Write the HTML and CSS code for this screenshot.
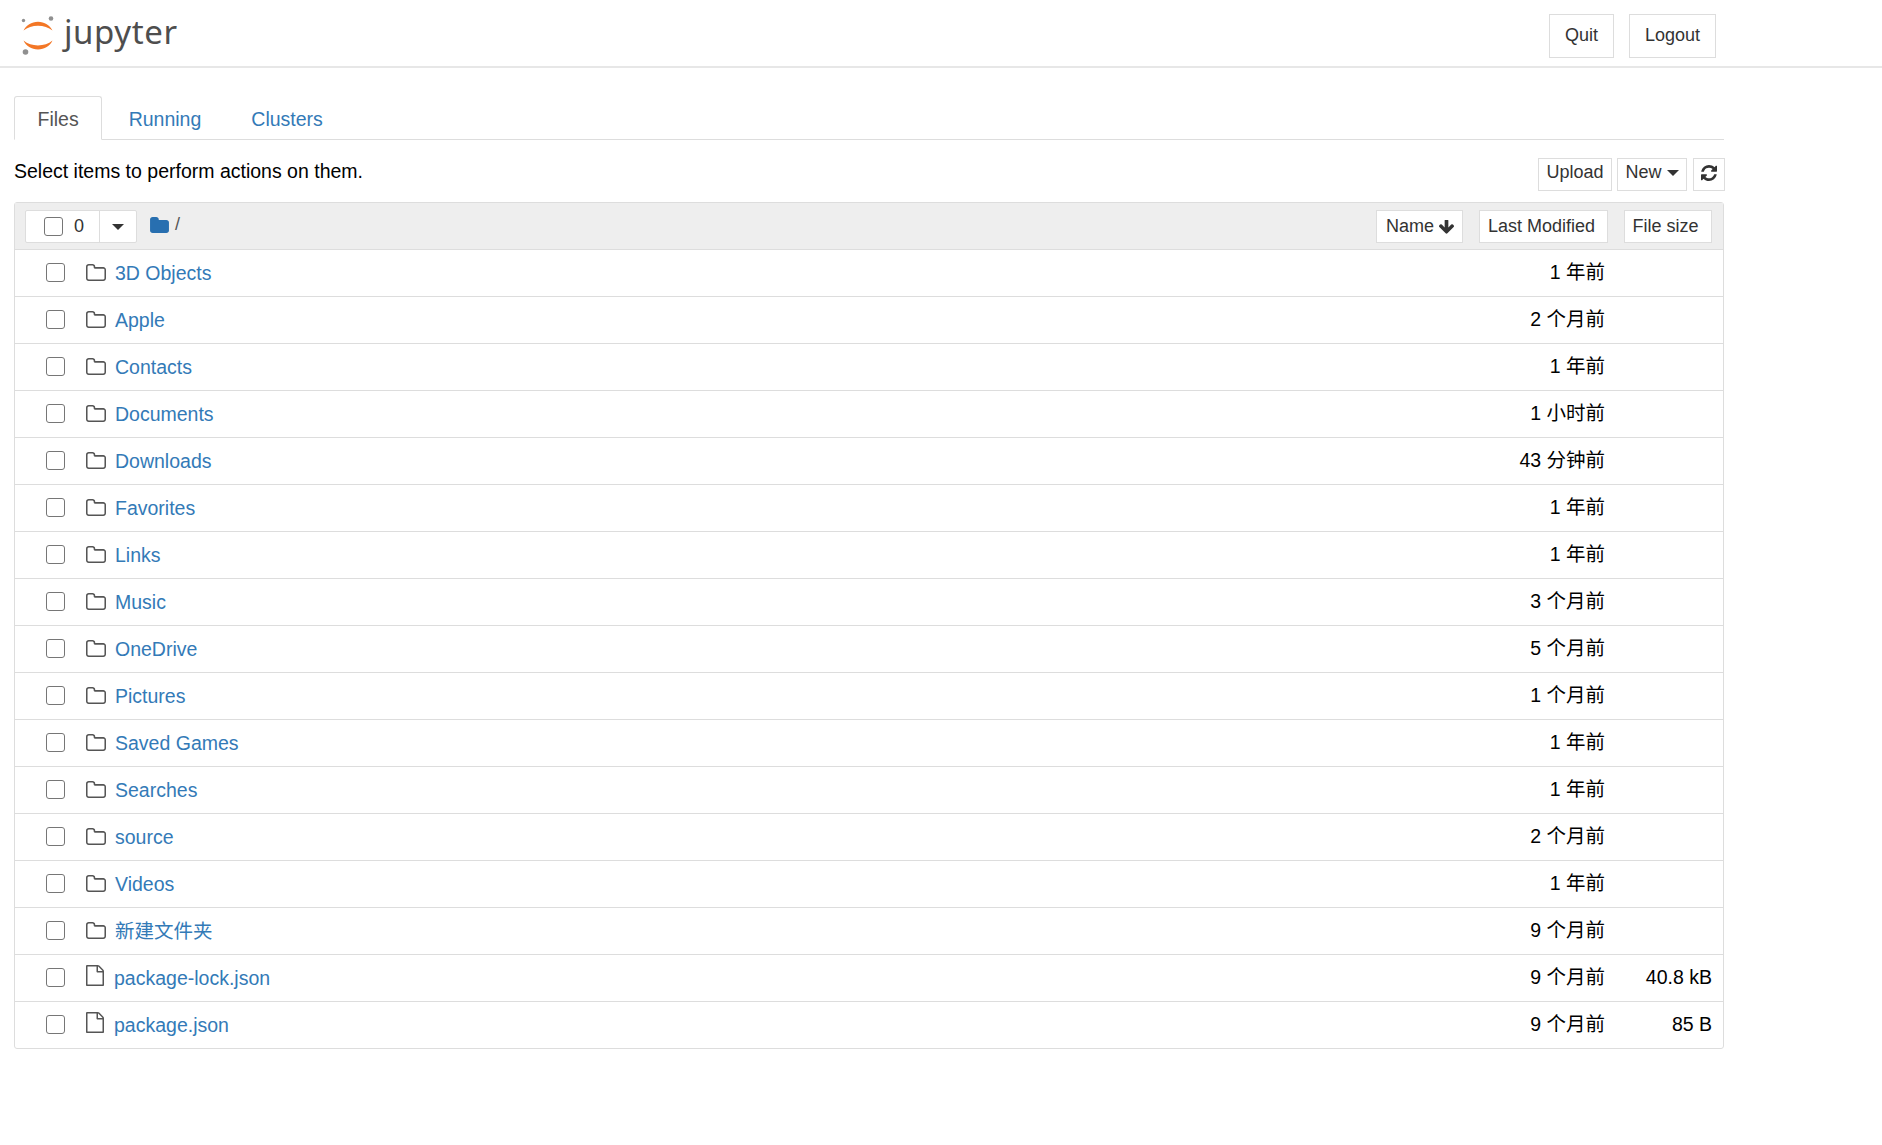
FILE: index.html
```html
<!DOCTYPE html>
<html lang="en">
<head>
<meta charset="utf-8">
<title>Home</title>
<link rel="stylesheet" href="styles.css">
</head>
<body>
<svg class="defs" width="0" height="0" aria-hidden="true">
  <symbol id="i-folder-o" viewBox="64 128 1664 1408"><path d="M1600 1312v-704q0-40-28-68t-68-28h-704q-40 0-68-28t-28-68v-64q0-40-28-68t-68-28h-320q-40 0-68 28t-28 68v960q0 40 28 68t68 28h1216q40 0 68-28t28-68zm128-704v704q0 92-66 158t-158 66h-1216q-92 0-158-66t-66-158v-960q0-92 66-158t158-66h320q92 0 158 66t66 158v32h672q92 0 158 66t66 158z"/></symbol>
  <symbol id="i-folder" viewBox="64 128 1664 1408"><path d="M1728 608v704q0 92-66 158t-158 66h-1216q-92 0-158-66t-66-158v-960q0-92 66-158t158-66h320q92 0 158 66t66 158v32h672q92 0 158 66t66 158z"/></symbol>
  <symbol id="i-file" viewBox="128 0 1536 1792"><path d="M1596 380q28 28 48 76t20 88v1152q0 40-28 68t-68 28h-1344q-40 0-68-28t-28-68v-1600q0-40 28-68t68-28h896q40 0 88 20t76 48zm-444-244v376h376q-10-29-22-41l-313-313q-12-12-41-22zm384 1528v-1024h-416q-40 0-68-28t-28-68v-416h-768v1536h1280z"/></symbol>
  <symbol id="i-refresh" viewBox="128 128 1536 1536"><path d="M1639 1056q0 5-1 7-64 268-268 434.500t-478 166.500q-146 0-282.500-55t-243.500-157l-129 129q-19 19-45 19t-45-19-19-45v-448q0-26 19-45t45-19h448q26 0 45 19t19 45-19 45l-137 137q71 66 161 102t187 36q134 0 250-65t186-179q11-17 53-117 8-23 30-23h192q13 0 22.500 9.500t9.500 22.500zm25-800v448q0 26-19 45t-45 19h-448q-26 0-45-19t-19-45 19-45l138-138q-148-137-349-137-134 0-250 65t-186 179q-11 17-53 117-8 23-30 23h-199q-13 0-22.500-9.500t-9.500-22.500v-7q65-268 270-434.500t480-166.500q146 0 284 55.500t245 156.500l130-129q19-19 45-19t45 19 19 45z"/></symbol>
  <symbol id="i-down" viewBox="117 219 1558 1392"><path d="M1675 832q0 53-37 90l-651 652q-39 37-91 37-53 0-90-37l-651-652q-38-36-38-90 0-53 38-91l74-75q39-37 91-37 53 0 90 37l294 294v-704q0-52 38-90t90-38h128q52 0 90 38t38 90v704l294-294q37-37 90-37 52 0 91 37l75 75q37 39 37 91z"/></symbol>
</svg>

<header class="site-header">
  <a class="logo" href="#">
    <svg class="logo-mark" viewBox="0 0 36 40" width="36" height="40" aria-hidden="true">
      <path class="arc" d="M3.500 15.500C6 10.500 11.500 6.800 18 6.800S30 10.500 32.500 15.500C28.500 12.300 23.500 10.700 18 10.700S7.500 12.300 3.500 15.500Z"/>
      <path class="arc" d="M3.500 25.500C6 31 11.500 34.500 18 34.500S30 31 32.500 25.500C28.500 28.800 23.500 30.400 18 30.400S7.500 28.800 3.500 25.500Z"/>
      <circle class="dot" cx="31" cy="3.500" r="2.300"/>
      <circle class="dot" cx="3.500" cy="5.500" r="1.700"/>
      <circle class="dot" cx="5.500" cy="37" r="2.800"/>
    </svg>
    <span class="logo-text">jupyter</span>
  </a>
  <div class="header-actions">
    <a class="btn btn-head" href="#">Quit</a>
    <a class="btn btn-head" href="#">Logout</a>
  </div>
</header>

<main class="page">
  <nav class="tabs">
    <a class="tab active" href="#">Files</a>
    <a class="tab" href="#">Running</a>
    <a class="tab" href="#">Clusters</a>
  </nav>

  <div class="toolbar">
    <span class="hint">Select items to perform actions on them.</span>
    <div class="toolbar-actions">
      <a class="btn btn-tool btn-upload" href="#">Upload</a>
      <a class="btn btn-tool btn-new" href="#">New <span class="caret"></span></a>
      <a class="btn btn-tool btn-refresh" href="#"><svg class="ico-refresh"><use href="#i-refresh"/></svg></a>
    </div>
  </div>

  <section class="list">
    <div class="list-head">
      <div class="select-group">
        <div class="select-main"><input class="check" type="checkbox"><span class="count">0</span></div>
        <div class="select-drop"><span class="caret"></span></div>
      </div>
      <a class="crumb" href="#"><svg class="ico-crumb"><use href="#i-folder"/></svg></a>
      <span class="crumb-sep">/</span>
      <div class="sort-group">
        <a class="btn btn-sort btn-name" href="#">Name <svg class="ico-down"><use href="#i-down"/></svg></a>
        <a class="btn btn-sort" href="#">Last Modified</a>
        <a class="btn btn-sort" href="#">File size</a>
      </div>
    </div>

    <div class="row"><input class="check" type="checkbox"><svg class="ico-folder"><use href="#i-folder-o"/></svg><a class="name" href="#">3D Objects</a><span class="time">1 年前</span><span class="size"></span></div>
    <div class="row"><input class="check" type="checkbox"><svg class="ico-folder"><use href="#i-folder-o"/></svg><a class="name" href="#">Apple</a><span class="time">2 个月前</span><span class="size"></span></div>
    <div class="row"><input class="check" type="checkbox"><svg class="ico-folder"><use href="#i-folder-o"/></svg><a class="name" href="#">Contacts</a><span class="time">1 年前</span><span class="size"></span></div>
    <div class="row"><input class="check" type="checkbox"><svg class="ico-folder"><use href="#i-folder-o"/></svg><a class="name" href="#">Documents</a><span class="time">1 小时前</span><span class="size"></span></div>
    <div class="row"><input class="check" type="checkbox"><svg class="ico-folder"><use href="#i-folder-o"/></svg><a class="name" href="#">Downloads</a><span class="time">43 分钟前</span><span class="size"></span></div>
    <div class="row"><input class="check" type="checkbox"><svg class="ico-folder"><use href="#i-folder-o"/></svg><a class="name" href="#">Favorites</a><span class="time">1 年前</span><span class="size"></span></div>
    <div class="row"><input class="check" type="checkbox"><svg class="ico-folder"><use href="#i-folder-o"/></svg><a class="name" href="#">Links</a><span class="time">1 年前</span><span class="size"></span></div>
    <div class="row"><input class="check" type="checkbox"><svg class="ico-folder"><use href="#i-folder-o"/></svg><a class="name" href="#">Music</a><span class="time">3 个月前</span><span class="size"></span></div>
    <div class="row"><input class="check" type="checkbox"><svg class="ico-folder"><use href="#i-folder-o"/></svg><a class="name" href="#">OneDrive</a><span class="time">5 个月前</span><span class="size"></span></div>
    <div class="row"><input class="check" type="checkbox"><svg class="ico-folder"><use href="#i-folder-o"/></svg><a class="name" href="#">Pictures</a><span class="time">1 个月前</span><span class="size"></span></div>
    <div class="row"><input class="check" type="checkbox"><svg class="ico-folder"><use href="#i-folder-o"/></svg><a class="name" href="#">Saved Games</a><span class="time">1 年前</span><span class="size"></span></div>
    <div class="row"><input class="check" type="checkbox"><svg class="ico-folder"><use href="#i-folder-o"/></svg><a class="name" href="#">Searches</a><span class="time">1 年前</span><span class="size"></span></div>
    <div class="row"><input class="check" type="checkbox"><svg class="ico-folder"><use href="#i-folder-o"/></svg><a class="name" href="#">source</a><span class="time">2 个月前</span><span class="size"></span></div>
    <div class="row"><input class="check" type="checkbox"><svg class="ico-folder"><use href="#i-folder-o"/></svg><a class="name" href="#">Videos</a><span class="time">1 年前</span><span class="size"></span></div>
    <div class="row"><input class="check" type="checkbox"><svg class="ico-folder"><use href="#i-folder-o"/></svg><a class="name" href="#">新建文件夹</a><span class="time">9 个月前</span><span class="size"></span></div>
    <div class="row"><input class="check" type="checkbox"><svg class="ico-file"><use href="#i-file"/></svg><a class="name" href="#">package-lock.json</a><span class="time">9 个月前</span><span class="size">40.8 kB</span></div>
    <div class="row"><input class="check" type="checkbox"><svg class="ico-file"><use href="#i-file"/></svg><a class="name" href="#">package.json</a><span class="time">9 个月前</span><span class="size">85 B</span></div>
  </section>
</main>
</body>
</html>
```

FILE: styles.css
```css
* { box-sizing: border-box; }

html, body { margin: 0; padding: 0; }

body {
  background: #fff;
  color: #000;
  font-family: "Liberation Sans", "Noto Sans CJK SC", sans-serif;
  font-size: 19.5px;
  line-height: 1.42857;
}

a { text-decoration: none; }

.defs { position: absolute; }

.site-header {
  height: 68px;
  border-bottom: 2px solid #e7e7e7;
  display: flex;
  align-items: flex-start;
  padding: 0 166px 0 20px;
}

.logo {
  display: flex;
  align-items: flex-start;
  height: 66px;
  padding-top: 15px;
}

.logo-mark { display: block; width: 36px; height: 40px; }
.arc { fill: #f37726; }
.dot { fill: #909090; }

.logo-text {
  font-family: "Noto Sans", sans-serif;
  font-size: 33px;
  line-height: 36px;
  color: #4e4e4e;
  margin-left: 8px;
  margin-top: -1px;
  letter-spacing: 0.6px;
}

.header-actions {
  margin-left: auto;
  margin-top: 14px;
  display: flex;
  gap: 15px;
}

.btn {
  display: flex;
  align-items: center;
  justify-content: center;
  background: #fff;
  border: 1.5px solid #ddd;
  color: #333;
  white-space: nowrap;
}

.btn-head { height: 44px; padding: 0 15px 1px; font-size: 18px; }

.page { width: 1710px; margin-left: 14px; }

.tabs {
  margin-top: 28px;
  height: 44px;
  display: flex;
  border-bottom: 1.5px solid #ddd;
}

.tab {
  height: 44px;
  padding: 4px 22.500px 0;
  margin-right: 3px;
  color: #337ab7;
  display: flex;
  align-items: center;
  border: 1.5px solid transparent;
  font-size: 19.5px;
}

.tab.active {
  color: #555;
  background: #fff;
  border-color: #ddd;
  border-bottom-color: #fff;
  border-radius: 3px 3px 0 0;
}

.toolbar {
  height: 62px;
  display: flex;
  align-items: flex-start;
  justify-content: space-between;
}

.hint { margin-top: 18px; }

.toolbar-actions {
  display: flex;
  margin-top: 18px;
  margin-right: -1px;
}

.btn-tool { height: 33px; font-size: 18px; padding-bottom: 3px; }
.btn-upload { width: 74px; }
.btn-new { width: 70px; margin-left: 5px; gap: 5px; }
.btn-refresh { width: 32px; margin-left: 6px; padding-bottom: 4px; }

.ico-refresh { width: 16px; height: 16px; fill: #333; }

.caret {
  display: inline-block;
  width: 0;
  height: 0;
  border-top: 6px solid #333;
  border-left: 6px solid transparent;
  border-right: 6px solid transparent;
}

.list {
  border: 1.5px solid #ddd;
  border-radius: 3px;
}

.list-head {
  height: 47px;
  background: #eee;
  border-bottom: 1.5px solid #ddd;
  display: flex;
  align-items: center;
  padding: 0 11px 0 10px;
}

.select-group {
  display: flex;
  height: 33px;
  width: 112px;
  background: #fff;
  border: 1.5px solid #ddd;
  border-radius: 2px;
}

.select-main {
  width: 74px;
  border-right: 1.5px solid #ddd;
  display: flex;
  align-items: center;
  padding-left: 18px;
  gap: 11px;
  font-size: 18px;
  color: #333;
}

.count { padding-top: 2px; }

.select-drop {
  flex: 1;
  display: flex;
  align-items: center;
  justify-content: center;
  padding-top: 1px;
}

.check {
  appearance: none;
  -webkit-appearance: none;
  margin: 0;
  width: 19px;
  height: 19px;
  flex: none;
  background: #fff;
  border: 1.5px solid #767676;
  border-radius: 3px;
}

.crumb { display: flex; margin-left: 13px; margin-top: -2px; }
.ico-crumb { width: 19px; height: 16px; fill: #286fb0; }
.crumb-sep { margin-left: 6px; margin-top: -2px; color: #555; font-size: 18px; }

.sort-group {
  margin-left: auto;
  display: flex;
  gap: 15.5px;
}

.btn-sort { height: 33px; padding: 2px 12.5px 0 7.5px; font-size: 18px; }
.btn-name { padding: 2px 8px 0 9px; gap: 5px; margin-right: 1px; }
.ico-down { width: 15px; height: 14px; fill: #333; }

.row {
  height: 47px;
  border-bottom: 1.5px solid #ddd;
  display: flex;
  align-items: center;
  padding-left: 31px;
  font-size: 19.5px;
}

.row:last-child { border-bottom: 0; height: 46px; }

.row .check { margin-top: -1px; }

.ico-folder { width: 20px; height: 17px; margin-left: 21px; margin-top: -2px; fill: #555; flex: none; }
.ico-file { width: 18px; height: 21px; margin-left: 21px; margin-top: -5px; fill: #555; flex: none; }

.name { color: #337ab7; margin-left: 9px; margin-top: 1px; }
.ico-file + .name { margin-left: 10px; }

.time { margin-left: auto; width: 200px; text-align: right; font-size: 19.5px; margin-right: 22px; }
.size { width: 96px; padding-right: 11px; text-align: right; }
```
